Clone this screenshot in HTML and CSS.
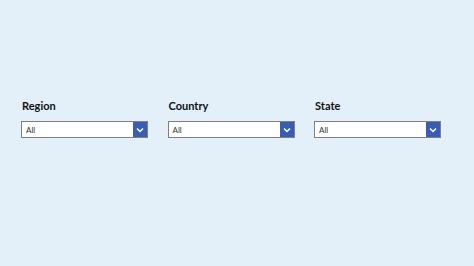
FILE: index.html
```html
<!DOCTYPE html>
<html>
<head>
<meta charset="utf-8">
<link rel="stylesheet" href="styles.css">
</head>
<body>
<div class="filters">
  <div class="filter">
    <div class="label">Region</div>
    <div class="select"><span class="value">All</span><span class="btn"><svg width="8" height="6" viewBox="0 0 8 6"><path d="M1 1.5 L4 4.5 L7 1.5" fill="none" stroke="#fff" stroke-width="1.5"/></svg></span></div>
  </div>
  <div class="filter">
    <div class="label">Country</div>
    <div class="select"><span class="value">All</span><span class="btn"><svg width="8" height="6" viewBox="0 0 8 6"><path d="M1 1.5 L4 4.5 L7 1.5" fill="none" stroke="#fff" stroke-width="1.5"/></svg></span></div>
  </div>
  <div class="filter">
    <div class="label">State</div>
    <div class="select"><span class="value">All</span><span class="btn"><svg width="8" height="6" viewBox="0 0 8 6"><path d="M1 1.5 L4 4.5 L7 1.5" fill="none" stroke="#fff" stroke-width="1.5"/></svg></span></div>
  </div>
</div>
</body>
</html>
```
FILE: styles.css
```css
html, body {
  margin: 0;
  padding: 0;
  background: #e3eff9;
  width: 474px;
  height: 266px;
  overflow: hidden;
  font-family: Lato, "Liberation Sans", sans-serif;
}
.filters {
  display: flex;
  gap: 19.5px;
  padding: 99px 0 0 21px;
}
.filter {
  width: 127px;
  display: flex;
  flex-direction: column;
}
.label {
  font-weight: 700;
  font-size: 11px;
  line-height: 14px;
  color: #111;
  margin-bottom: 8px;
  padding-left: 1px;
}
.select {
  height: 17px;
  box-sizing: border-box;
  border: 1px solid #808080;
  background: #fff;
  display: flex;
  align-items: center;
  justify-content: space-between;
}
.value {
  font-size: 8px;
  color: #333;
  padding-left: 4px;
}
.btn {
  width: 14px;
  height: 15px;
  background: #3a5db4;
  display: flex;
  align-items: center;
  justify-content: center;
}
```
